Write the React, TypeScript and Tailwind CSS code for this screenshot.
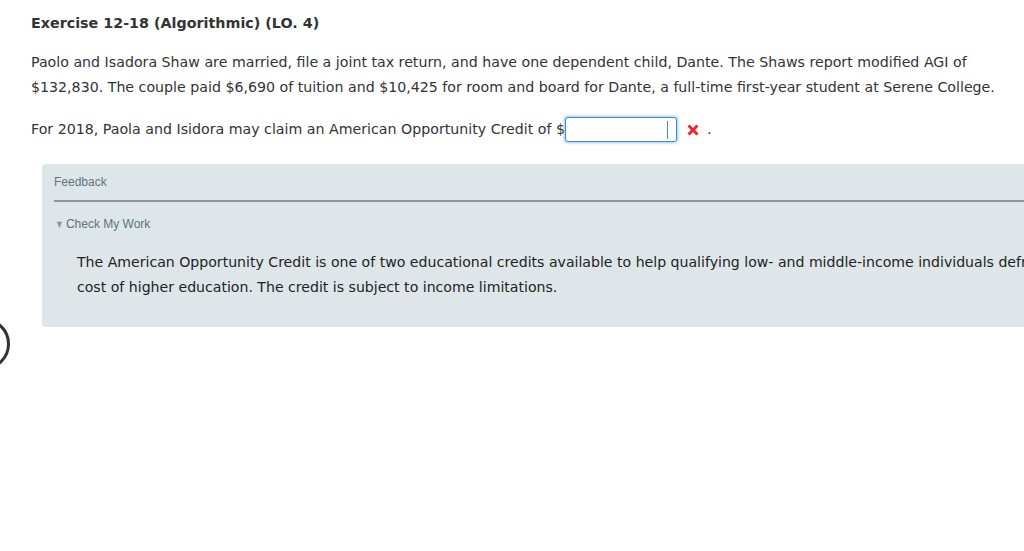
export default function App() {
  return (
    <div className="relative w-[1024px] h-[551px] overflow-hidden bg-white text-[#333] font-['DejaVu_Sans',Verdana,sans-serif]">
      {/* stray circle at left edge */}
      <div className="absolute left-[-42px] top-[318px] w-[52px] h-[52px] rounded-full border-[3px] border-[#333]" />

      <div className="pl-[31px] pt-[14px]">
        <h1 className="text-[14.3px] font-bold leading-[18px]">Exercise 12-18 (Algorithmic) (LO. 4)</h1>

        <p className="mt-[18px] text-[14.2px] leading-[25px] w-[985px]">
          Paolo and Isadora Shaw are married, file a joint tax return, and have one dependent child, Dante. The Shaws report modified AGI of
          <br />
          $132,830. The couple paid $6,690 of tuition and $10,425 for room and board for Dante, a full-time first-year student at Serene College.
        </p>

        <div className="mt-[17px] flex items-center text-[14.2px] leading-[25px]">
          <span>For 2018, Paola and Isidora may claim an American Opportunity Credit of $</span>
          <div className="relative w-[112px] h-[25px] rounded-[3px] border border-[#3b8fd8] bg-white shadow-[0_0_3px_1px_rgba(90,160,230,0.6)]">
            <span className="absolute right-[8px] top-[3px] w-[1.5px] h-[18px] bg-[#3b8fd8]" />
          </div>
          <svg className="ml-[10px]" width="12" height="12" viewBox="0 0 12 12">
            <path d="M1.5 1.5 L10.5 10.5 M10.5 1.5 L1.5 10.5" stroke="#e8262b" strokeWidth="3" strokeLinecap="butt" />
          </svg>
          <span className="ml-[8px]">.</span>
        </div>
      </div>

      <div className="ml-[42px] mt-[22px] w-[1000px] h-[163px] rounded-[4px] bg-[#dfe6e9] pl-[12px] pt-[11px] font-['Liberation_Sans',Arial,sans-serif]">
        <div className="text-[12px] leading-[14px] text-[#5d7480]">Feedback</div>
        <div className="mt-[11px] h-[2px] bg-[#8d979b]" />
        <div className="mt-[15px] text-[12px] leading-[14px] text-[#5d7480] flex items-center">
          <span className="text-[11px] leading-[11px] text-[#8d979b] mr-[1px] scale-x-[0.8]">▼</span>
          Check My Work
        </div>
        <p className="mt-[19px] ml-[23px] text-[14.1px] leading-[25px] text-[#222] whitespace-nowrap font-['DejaVu_Sans',Verdana,sans-serif]">
          The American Opportunity Credit is one of two educational credits available to help qualifying low- and middle-income individuals defray the
          <br />
          cost of higher education. The credit is subject to income limitations.
        </p>
      </div>
    </div>
  );
}
